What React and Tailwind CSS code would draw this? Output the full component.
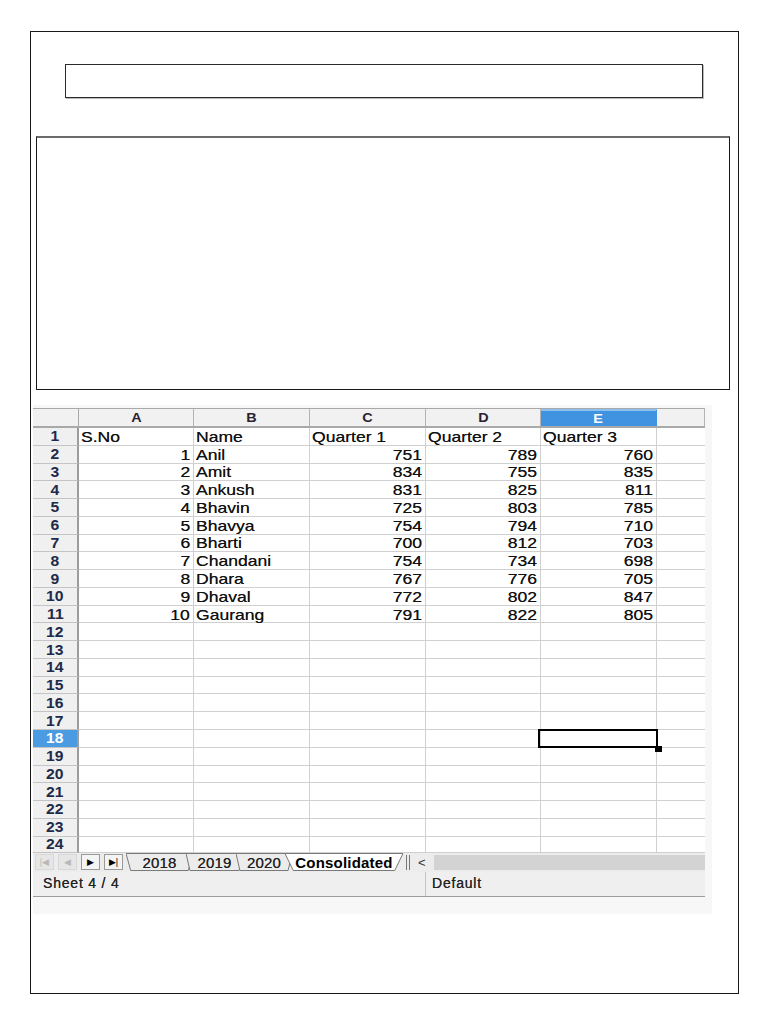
import React from 'react';

const cols = [
  { key: 'A', w: 'w-[115px]' },
  { key: 'B', w: 'w-[116px]' },
  { key: 'C', w: 'w-[116px]' },
  { key: 'D', w: 'w-[115px]' },
  { key: 'E', w: 'w-[116px]' },
  { key: 'F', w: 'w-[48px]' },
];

const data = [
  ['S.No', 'Name', 'Quarter 1', 'Quarter 2', 'Quarter 3'],
  [1, 'Anil', 751, 789, 760],
  [2, 'Amit', 834, 755, 835],
  [3, 'Ankush', 831, 825, 811],
  [4, 'Bhavin', 725, 803, 785],
  [5, 'Bhavya', 754, 794, 710],
  [6, 'Bharti', 700, 812, 703],
  [7, 'Chandani', 754, 734, 698],
  [8, 'Dhara', 767, 776, 705],
  [9, 'Dhaval', 772, 802, 847],
  [10, 'Gaurang', 791, 822, 805],
];

const rows = Array.from({ length: 24 }, (_, i) => i + 1);

function Cell({ value, width, selected }) {
  const isNum = typeof value === 'number';
  return (
    <div
      className={`relative ${width} h-full shrink-0 border-r border-b border-[#d0d0d0] flex items-center ${
        isNum ? 'justify-end pr-[3px]' : 'justify-start pl-[2px]'
      } overflow-visible whitespace-nowrap`}
    >
      {value !== undefined && value !== null ? (
        <span
          className={`inline-block text-[15px] text-[#111] leading-none scale-x-[1.17] [text-shadow:0_0_0.3px_#444] ${
            isNum ? 'origin-right' : 'origin-left'
          }`}
        >
          {value}
        </span>
      ) : null}
      {selected && (
        <div className="absolute -left-[3px] -top-[1px] -right-[2px] -bottom-[1px] border-[2.5px] border-black z-10">
          <div className="absolute -right-[6px] -bottom-[6px] w-[7px] h-[6px] bg-black" />
        </div>
      )}
    </div>
  );
}

function Tab({ label, active, width }) {
  return (
    <div className={`relative ${width} h-[18px] -ml-[7px] first:ml-0 flex items-center justify-center ${active ? 'z-10' : ''}`}>
      <svg className="absolute inset-0 w-full h-full" viewBox="0 0 100 18" preserveAspectRatio="none">
        <polygon
          points="0,0.5 100,0.5 93,17.5 7,17.5"
          fill={active ? '#ffffff' : '#ececec'}
          stroke="#7a7a7a"
          strokeWidth="1"
          vectorEffect="non-scaling-stroke"
        />
      </svg>
      <span
        className={`relative text-[15px] leading-none ${
          active ? 'font-bold text-black tracking-[0.2px]' : 'text-[#222] tracking-[0.2px] [text-shadow:0_0_0.3px_#444]'
        }`}
      >
        {label}
      </span>
    </div>
  );
}

function NavBtn({ children, dim }) {
  return (
    <div
      className={`w-[19px] h-[16px] border ${
        dim ? 'border-[#d8d8d8] bg-[#e6e6e6] text-[#b8b8b8]' : 'border-[#9a9a9a] bg-[#f4f4f4] text-black'
      } flex items-center justify-center text-[9px] leading-none`}
    >
      {children}
    </div>
  );
}

function Spreadsheet() {
  return (
    <div className="ml-[2px] mt-[15px] w-[679px] bg-[#f7f7f7] pt-[3px] pr-[7px] pb-[17px]">
      <div className="w-[672px] bg-white">
        {/* column headers */}
        <div className="flex h-[20px] border-t border-b-2 border-[#a9a9a9] bg-[#f1f1f1]">
          <div className="w-[46px] h-full shrink-0 border-r border-[#a9a9a9]" />
          {cols.map((c) => (
            <div
              key={c.key}
              className={`${c.w} h-full shrink-0 border-r ${
                c.key === 'E'
                  ? 'bg-[#3f93e0] border-[#3f93e0] border-t-2 border-t-[#8cc1ef] text-white'
                  : 'border-[#b4b4b4] text-[#2a1f33]'
              } flex items-center justify-center text-[12px] font-bold leading-none`}
            >
              <span className="inline-block scale-x-[1.2]">{c.key === 'F' ? '' : c.key}</span>
            </div>
          ))}
        </div>
        {/* rows */}
        {rows.map((r) => {
          const d = data[r - 1] || [];
          const sel = r === 18;
          return (
            <div key={r} className={`flex ${r === 24 ? 'h-[16px] overflow-hidden' : 'h-[17.78px]'}`}>
              <div
                className={`w-[46px] h-full shrink-0 border-r-2 border-b border-r-[#9c9c9c] border-b-[#c4c4c4] flex items-center justify-center text-[14px] font-bold leading-none ${
                  sel ? 'bg-[#4a9be2] text-white' : 'bg-[#f0f0f0] text-[#1f2a48]'
                }`}
              >
                <span className="inline-block scale-x-[1.12]">{r}</span>
              </div>
              <Cell value={d[0]} width="w-[115px]" />
              <Cell value={d[1]} width="w-[116px]" />
              <Cell value={d[2]} width="w-[116px]" />
              <Cell value={d[3]} width="w-[115px]" />
              <Cell value={d[4]} width="w-[116px]" selected={sel} />
              <div className="w-[48px] h-full shrink-0 border-b border-[#d0d0d0]" />
            </div>
          );
        })}
        {/* sheet tabs */}
        <div className="flex items-center h-[19px] bg-[#ececec] pl-[2px]">
          <div className="flex items-center gap-[4px]">
            <NavBtn dim>|◀</NavBtn>
            <NavBtn dim>◀</NavBtn>
            <NavBtn>▶</NavBtn>
            <NavBtn>▶|</NavBtn>
          </div>
          <div className="flex items-center ml-[3px]">
            <Tab label="2018" width="w-[67px]" />
            <Tab label="2019" width="w-[57px]" />
            <Tab label="2020" width="w-[56px]" />
            <Tab label="Consolidated" active width="w-[118px]" />
          </div>
          <div className="flex items-center ml-[3px] h-full">
            <div className="w-[4px] h-[15px] border-l border-r border-[#777]" />
            <span className="ml-[8px] text-[13px] text-[#333] leading-none">&lt;</span>
          </div>
          <div className="ml-[8px] flex-1 h-[15px] bg-[#d3d3d3]" />
        </div>
        {/* status bar */}
        <div className="flex items-center h-[25px] bg-[#efefef] border-b border-[#9c9c9c] text-[14px] tracking-[0.8px] text-[#222] [text-shadow:0_0_0.3px_#444]">
          <div className="w-[393px] pl-[10px] h-full flex items-center border-r border-[#c4c4c4]">Sheet 4 / 4</div>
          <div className="pl-[6px]">Default</div>
        </div>
      </div>
    </div>
  );
}

export default function App() {
  return (
    <div className="w-[768px] h-[1024px] bg-white font-['Liberation_Sans',Arial,sans-serif] pt-[31px] pl-[30px]">
      <div className="w-[709px] h-[963px] border-[1.5px] border-[#1a1a1a] flex flex-col">
        <div className="ml-[34px] mt-[32px] w-[638px] h-[34px] border border-[#2a2a2a] shadow-[1px_1px_0_#bbb]" />
        <div className="ml-[5px] mt-[38px] w-[694px] h-[254px] border border-[#1a1a1a] border-t-2 border-t-[#6a6a6a]" />
        <Spreadsheet />
      </div>
    </div>
  );
}
